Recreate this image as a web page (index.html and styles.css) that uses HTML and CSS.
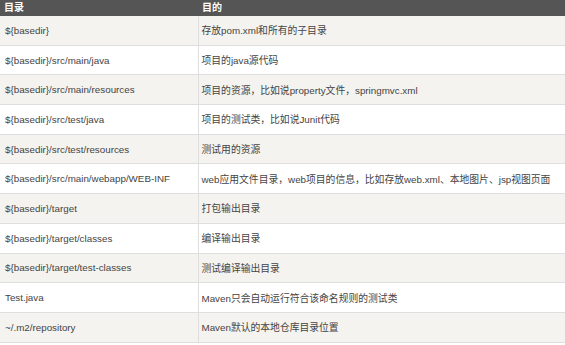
FILE: index.html
```html
<!DOCTYPE html>
<html>
<head>
<meta charset="utf-8">
<link rel="stylesheet" href="styles.css">
</head>
<body>
<table class="dirs">
  <thead>
    <tr><th class="c1">目录</th><th class="c2">目的</th></tr>
  </thead>
  <tbody>
    <tr><td>${basedir}</td><td>存放pom.xml和所有的子目录</td></tr>
    <tr><td>${basedir}/src/main/java</td><td>项目的java源代码</td></tr>
    <tr><td>${basedir}/src/main/resources</td><td>项目的资源，比如说property文件，springmvc.xml</td></tr>
    <tr><td>${basedir}/src/test/java</td><td>项目的测试类，比如说Junit代码</td></tr>
    <tr><td>${basedir}/src/test/resources</td><td>测试用的资源</td></tr>
    <tr><td>${basedir}/src/main/webapp/WEB-INF</td><td>web应用文件目录，web项目的信息，比如存放web.xml、本地图片、jsp视图页面</td></tr>
    <tr><td>${basedir}/target</td><td>打包输出目录</td></tr>
    <tr><td>${basedir}/target/classes</td><td>编译输出目录</td></tr>
    <tr><td>${basedir}/target/test-classes</td><td>测试编译输出目录</td></tr>
    <tr><td>Test.java</td><td>Maven只会自动运行符合该命名规则的测试类</td></tr>
    <tr><td>~/.m2/repository</td><td>Maven默认的本地仓库目录位置</td></tr>
  </tbody>
</table>
</body>
</html>
```

FILE: styles.css
```css
html, body {
  margin: 0;
  padding: 0;
  background: #ffffff;
}
.dirs {
  width: 565px;
  border-collapse: collapse;
  table-layout: fixed;
  font-family: "Liberation Sans", "Noto Sans CJK SC", sans-serif;
  font-size: 9.8px;
  color: #444;
}
.dirs th {
  background: #555555;
  color: #ffffff;
  font-weight: bold;
  text-align: left;
  height: 16px;
  padding: 0 4px;
  line-height: 14px;
  font-size: 10px;
}
.dirs th.c1 { width: 190px; }
.dirs td {
  height: 28.7px;
  padding: 0 4px 0 5px;
  border-bottom: 1px solid #dedede;
  white-space: nowrap;
  vertical-align: middle;
}
.dirs td + td {
  border-left: 1px solid #dedede;
  padding-left: 3px;
}
.dirs tbody tr:nth-child(odd) td {
  background: #f4f3ef;
}
```
